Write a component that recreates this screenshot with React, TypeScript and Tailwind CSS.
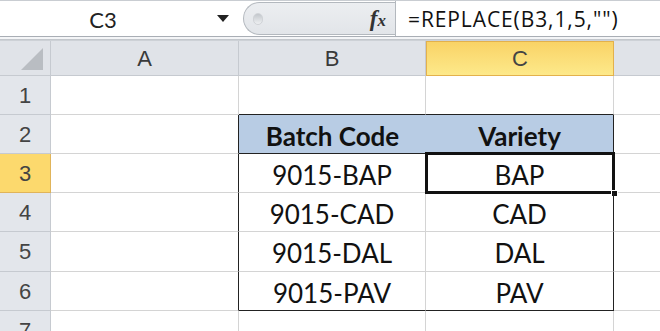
import React from "react";

const GRID = "border-[#d4d4d4]";

function ColHeader({ label, active, last }: { label: string; active?: boolean; last?: boolean }) {
  return (
    <div
      className={
        "flex items-center justify-center text-[22px] " +
        (active
          ? "bg-gradient-to-b from-[#f9d366] to-[#fde98a] border border-[#e3b14c] text-[#444]"
          : "bg-[#e0e3e8] border-r border-b border-[#c6cad0] text-[#3a3a3a]") +
        (last ? " border-r-0" : "")
      }
    >
      {label}
    </div>
  );
}

function RowHeader({ n, active }: { n: number; active?: boolean }) {
  return (
    <div
      className={
        "flex items-center justify-center text-[22px] text-[#444] border-r border-b " +
        (active ? "bg-[#fcd96d] border-[#e0b45a]" : "bg-[#e3e6eb] border-[#c6cad0]")
      }
    >
      {n}
    </div>
  );
}

export default function App() {
  const rows: { b: string; c: string }[] = [
    { b: "9015-BAP", c: "BAP" },
    { b: "9015-CAD", c: "CAD" },
    { b: "9015-DAL", c: "DAL" },
    { b: "9015-PAV", c: "PAV" },
  ];
  const cellFont = { fontFamily: '"Lato", "Liberation Sans", sans-serif' };

  return (
    <div
      className="w-[660px] h-[331px] overflow-hidden bg-white flex flex-col"
      style={{ fontFamily: '"Liberation Sans", Arial, sans-serif' }}
    >
      {/* formula bar */}
      <div className="h-[37px] flex border-t border-[#c9cdd2] border-b border-b-[#a9aeb5] bg-white">
        <div className="w-[243px] shrink-0 flex items-center">
          <div className="w-[206px] text-center text-[22px] text-[#222] pt-[2px]" style={cellFont}>C3</div>
          <svg width="12" height="7" viewBox="0 0 12 7" className="ml-[11px]">
            <path d="M0 0 L12 0 L6 7 Z" fill="#222" />
          </svg>
        </div>
        <div className="w-[152px] shrink-0 mt-[1px] mb-[1px] rounded-l-[17px] border border-r-0 border-[#b3b8be] bg-gradient-to-b from-[#eceef1] to-[#e2e5e9] flex items-center">
          <div className="ml-[9px] w-[10px] h-[12px] rounded-full bg-gradient-to-b from-[#c3c7cc] to-[#eef0f2] border border-[#d0d3d7]" />
          <div className="ml-auto mr-[9px] text-[23px] italic font-bold text-[#333] leading-none" style={{ fontFamily: '"Liberation Serif", serif' }}>
            f<span className="text-[17px]">x</span>
          </div>
        </div>
        <div
          className="flex-1 min-w-0 border-l border-[#b3b8be] flex items-center pl-[12px] pt-[2px] text-[21px] tracking-[0.9px] text-[#111] whitespace-nowrap"
          style={{ fontFamily: '"Open Sans", "Liberation Sans", sans-serif' }}
        >
          =REPLACE(B3,1,5,"")
        </div>
      </div>
      {/* separator */}
      <div className="h-[7px] bg-[#eef0f2] border-b border-[#cdd1d6] flex flex-col">
        <div className="h-[3px] border-b border-[#c3c7cc] bg-[#f4f5f7]" />
      </div>

      {/* grid */}
      <div className="grid grid-cols-[51px_188px_187px_188px_1fr] grid-rows-[35px_39px_39px_39px_39px_40px_39px_39px]">
        {/* header row */}
        <div className="bg-[#e0e3e8] border-r border-b border-[#c6cad0] flex items-end justify-end pr-[7px] pb-[5px]">
          <svg width="22" height="22" viewBox="0 0 22 22">
            <path d="M22 0 L22 22 L0 22 Z" fill="#b9bdc2" />
          </svg>
        </div>
        <ColHeader label="A" />
        <ColHeader label="B" />
        <ColHeader label="C" active />
        <ColHeader label="" last />

        {/* row 1 */}
        <RowHeader n={1} />
        <div className={"border-r border-b " + GRID} />
        <div className={"border-r border-b border-r-[#d4d4d4] border-b-[#222]"} />
        <div className={"border-r border-b border-r-[#d4d4d4] border-b-[#222]"} />
        <div className={"border-b " + GRID} />

        {/* row 2 header */}
        <RowHeader n={2} />
        <div className="border-r border-b border-r-[#222] border-b-[#d4d4d4]" />
        <div
          className="bg-[#b8cce4] border-b border-[#222] flex items-center justify-center pt-[4px] text-[26px] font-bold text-[#111]"
          style={cellFont}
        >
          Batch Code
        </div>
        <div
          className="bg-[#b8cce4] border-r border-b border-[#222] flex items-center justify-center pt-[4px] text-[26px] font-bold text-[#111]"
          style={cellFont}
        >
          Variety
        </div>
        <div className={"border-b " + GRID} />

        {rows.map((r, i) => {
          const last = i === rows.length - 1;
          const selected = i === 0;
          return (
            <React.Fragment key={r.b}>
              <RowHeader n={i + 3} active={selected} />
              <div className="border-r border-b border-r-[#222] border-b-[#d4d4d4]" />
              <div
                className={
                  "border-r border-b border-r-[#d4d4d4] flex items-center justify-center pt-[4px] text-[26px] text-[#111] " +
                  (last ? "border-b-[#222]" : "border-b-[#d4d4d4]")
                }
                style={cellFont}
              >
                {r.b}
              </div>
              <div
                className={
                  "relative border-r border-b border-r-[#222] flex items-center justify-center pt-[4px] text-[26px] text-[#111] " +
                  (last ? "border-b-[#222]" : "border-b-[#d4d4d4]")
                }
                style={cellFont}
              >
                {r.c}
                {selected && (
                  <>
                    <div className="absolute left-[-1px] top-[-2px] right-[-2px] bottom-[-2px] border-[3px] border-[#111] pointer-events-none" />
                    <div className="absolute right-[-5px] bottom-[-5px] w-[7px] h-[7px] bg-[#111] border border-white" />
                  </>
                )}
              </div>
              <div className={"border-b " + GRID} />
            </React.Fragment>
          );
        })}

        {/* row 7 */}
        <RowHeader n={7} />
        <div className={"border-r border-b " + GRID} />
        <div className={"border-r border-b " + GRID} />
        <div className={"border-r border-b " + GRID} />
        <div className={"border-b " + GRID} />
      </div>
    </div>
  );
}
